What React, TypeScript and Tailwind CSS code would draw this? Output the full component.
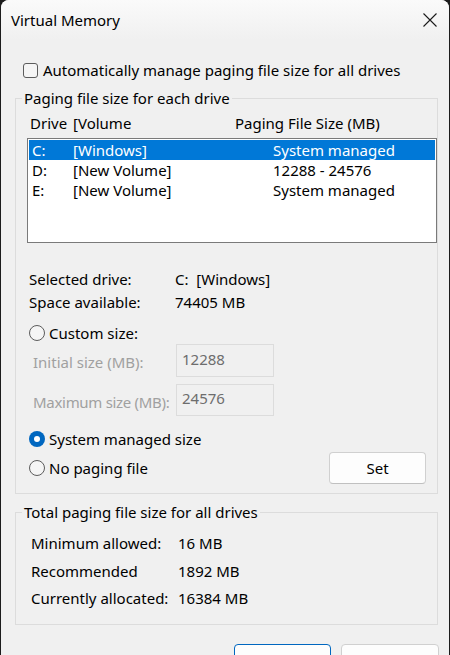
const drives = [
  { letter: 'C:', label: '[Windows]', size: 'System managed', selected: true },
  { letter: 'D:', label: '[New Volume]', size: '12288 - 24576', selected: false },
  { letter: 'E:', label: '[New Volume]', size: 'System managed', selected: false },
];

function Radio({ checked }: { checked?: boolean }) {
  if (checked) {
    return (
      <span className="flex h-[16px] w-[16px] shrink-0 items-center justify-center rounded-full bg-[#0067c0]">
        <span className="h-[6px] w-[6px] rounded-full bg-white" />
      </span>
    );
  }
  return <span className="h-[16px] w-[16px] shrink-0 rounded-full border border-[#5c5c5c] bg-[#f5f5f5]" />;
}

function GroupBox({ title, className, children }: { title: string; className?: string; children: React.ReactNode }) {
  return (
    <div className={`relative ml-[14px] w-[423px] border border-[#dcdcdc] ${className ?? ''}`}>
      <span className="absolute -top-[11px] left-[6px] bg-[#f0f0f0] px-[2px] leading-[20px]">{title}</span>
      {children}
    </div>
  );
}

export default function App() {
  return (
    <div
      className="h-[655px] w-[450px] overflow-hidden bg-[#1c1c1c] text-[15px] leading-[20px] text-black"
      style={{ fontFamily: '"Segoe UI", "Noto Sans", sans-serif' }}
    >
      <div className="ml-px min-h-full w-[448px] rounded-t-[8px] bg-[#f0f0f0] pb-[20px]">
        {/* title bar */}
        <div className="flex h-[40px] items-center justify-between rounded-t-[8px] bg-gradient-to-b from-[#fafafa] to-[#f0f0f0] pl-[10px] pr-[12px]">
          <span>Virtual Memory</span>
          <svg width="14" height="14" viewBox="0 0 14 14" className="mt-[-1px]">
            <path d="M0.5 0.5 L13.5 13.5 M13.5 0.5 L0.5 13.5" stroke="#1a1a1a" strokeWidth="1.1" />
          </svg>
        </div>

        {/* auto-manage checkbox */}
        <div className="mt-[20px] flex h-[20px] items-center pl-[22px]">
          <span className="h-[15px] w-[15px] rounded-[3px] border border-[#5c5c5c] bg-[#f5f5f5]" />
          <span className="ml-[5px]">Automatically manage paging file size for all drives</span>
        </div>

        <GroupBox title="Paging file size for each drive" className="mt-[18px] pb-[9px]">
          <div className="mt-[14px] flex h-[20px] items-center pl-[14px]">
            <span className="w-[43px]">Drive</span>
            <span className="w-[162px]">[Volume</span>
            <span>Paging File Size (MB)</span>
          </div>

          <div className="ml-[11px] mt-[5px] h-[105px] w-[410px] border border-[#7a7a7a] bg-white p-px">
            {drives.map((d) => (
              <div
                key={d.letter}
                className={`flex h-[20px] items-center pl-[3px] ${d.selected ? 'bg-[#0078d7] text-white' : ''}`}
              >
                <span className="w-[41px]">{d.letter}</span>
                <span className="w-[200px]">{d.label}</span>
                <span>{d.size}</span>
              </div>
            ))}
          </div>

          <div className="mt-[26px] flex h-[20px] items-center pl-[13px]">
            <span className="w-[146px]">Selected drive:</span>
            <span>C:&nbsp; [Windows]</span>
          </div>
          <div className="mt-[3px] flex h-[20px] items-center pl-[13px]">
            <span className="w-[146px]">Space available:</span>
            <span>74405 MB</span>
          </div>

          <div className="mt-[11px] flex h-[20px] items-center gap-[4px] pl-[13px]">
            <Radio />
            <span>Custom size:</span>
          </div>

          <div className="mt-px flex items-center pl-[17px] text-[#a0a0a0]">
            <span className="w-[143px] pt-[3px]">Initial size (MB):</span>
            <div className="h-[33px] w-[98px] border border-[#dcdcdc] px-[5px] pt-[4px] text-[#6d6d6d]">12288</div>
          </div>
          <div className="mt-[7px] flex items-center pl-[17px] text-[#a0a0a0]">
            <span className="w-[143px] pt-[3px] tracking-[-0.3px]">Maximum size (MB):</span>
            <div className="h-[32px] w-[98px] border border-[#dcdcdc] px-[5px] pt-[3px] text-[#6d6d6d]">24576</div>
          </div>

          <div className="mt-[13px] flex h-[20px] items-center gap-[4px] pl-[13px]">
            <Radio checked />
            <span>System managed size</span>
          </div>

          <div className="mt-[3px] flex h-[32px] items-center pl-[13px] pr-[11px]">
            <Radio />
            <span className="ml-[4px]">No paging file</span>
            <button className="ml-auto h-[32px] w-[97px] rounded-[4px] border border-[#d0d0d0] border-b-[#c0c0c0] bg-[#fdfdfd]">
              Set
            </button>
          </div>
        </GroupBox>

        <GroupBox title="Total paging file size for all drives" className="mt-[18px] pb-[16px]">
          <div className="mt-[20px] flex h-[20px] items-center pl-[15px]">
            <span className="w-[147px]">Minimum allowed:</span>
            <span>16 MB</span>
          </div>
          <div className="mt-[8px] flex h-[20px] items-center pl-[15px]">
            <span className="w-[147px]">Recommended</span>
            <span>1892 MB</span>
          </div>
          <div className="mt-[7px] flex h-[20px] items-center pl-[15px]">
            <span className="w-[147px]">Currently allocated:</span>
            <span>16384 MB</span>
          </div>
        </GroupBox>

        <div className="mt-[19px] flex gap-[10px] pl-[233px]">
          <button className="h-[32px] w-[97px] shrink-0 rounded-[4px] border border-[#0067c0] bg-[#fdfdfd] pt-[4px]">OK</button>
          <button className="h-[32px] w-[98px] shrink-0 rounded-[4px] border border-[#d0d0d0] bg-[#fdfdfd] pt-[4px]">Cancel</button>
        </div>
      </div>
    </div>
  );
}
